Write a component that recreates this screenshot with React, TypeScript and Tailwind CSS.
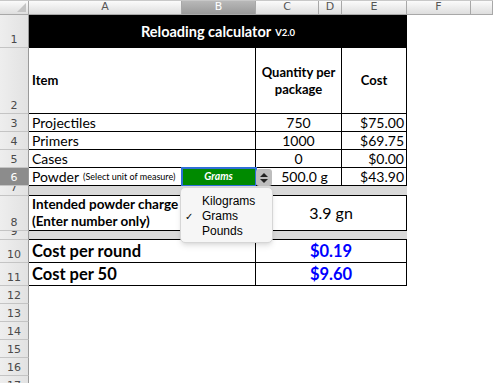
import React from "react";

const font = { fontFamily: "Lato, 'Open Sans', sans-serif" };

function RowHead({ n, h, sel }: { n?: string; h: string; sel?: boolean }) {
  return (
    <div
      className={`${h} w-[29px] shrink-0 flex items-end justify-center overflow-hidden border-r border-b border-r-[#9a9a9a] border-b-[#c4c4c4] text-[11px] leading-none pb-[2px] ${
        sel ? "bg-[#8c8c8c] text-white" : "bg-gradient-to-r from-[#eeeeee] to-[#e2e2e2] text-[#4a4a4a]"
      }`}
      style={{ fontFamily: "'DejaVu Sans', sans-serif" }}
    >
      {n}
    </div>
  );
}

function ColHead({ w, label, sel }: { w: string; label?: string; sel?: boolean }) {
  return (
    <div
      className={`${w} h-full shrink-0 flex items-center justify-center border-r border-b border-[#a8a8a8] text-[11px] ${
        sel ? "bg-gradient-to-b from-[#b8b8b8] to-[#9a9a9a] text-white" : "bg-gradient-to-b from-[#fbfbfb] to-[#dedede] text-[#555]"
      }`}
      style={{ fontFamily: "'DejaVu Sans', sans-serif" }}
    >
      {label}
    </div>
  );
}

function Row({ n, h, sel, children }: { n: string; h: string; sel?: boolean; children?: React.ReactNode }) {
  return (
    <div className={`flex ${h}`}>
      <RowHead n={n} h={h} sel={sel} />
      {children}
    </div>
  );
}

const items = [
  { name: "Projectiles", qty: "750", cost: "$75.00" },
  { name: "Primers", qty: "1000", cost: "$69.75" },
  { name: "Cases", qty: "0", cost: "$0.00" },
];

export default function App() {
  return (
    <div className="relative w-[493px] h-[383px] overflow-hidden bg-white text-black" style={font}>
      {/* column headers */}
      <div className="flex h-[15px] border-t border-[#c8c8c8]">
        <div className="relative w-[29px] h-full shrink-0 border-r border-b border-[#a8a8a8] bg-gradient-to-b from-[#fbfbfb] to-[#dedede]">
          <div className="absolute right-[2px] bottom-[2px] w-0 h-0 border-l-[9px] border-l-transparent border-b-[9px] border-b-[#c4c4c4]" />
        </div>
        <ColHead w="w-[153px]" label="A" />
        <ColHead w="w-[74px]" label="B" sel />
        <ColHead w="w-[63px]" label="C" />
        <ColHead w="w-[23px]" label="D" />
        <ColHead w="w-[65px]" label="E" />
        <ColHead w="w-[64px]" label="F" />
        <ColHead w="flex-1" />
      </div>

      <Row n="1" h="h-[33px]">
        <div className="w-[378px] bg-black text-white flex items-center justify-center font-bold text-[14.5px]">
          Reloading calculator<span className="ml-1 text-[9.5px] mt-[3px]">V2.0</span>
        </div>
      </Row>

      <Row n="2" h="h-[66px]">
        <div className="w-[227px] border-r border-b border-black flex items-center pl-[3px] font-bold text-[13px]">Item</div>
        <div className="w-[86px] border-r border-b border-black flex items-center justify-center text-center font-bold text-[13px] leading-[17px]">
          Quantity per
          <br />
          package
        </div>
        <div className="w-[65px] border-r border-b border-black flex items-center justify-center font-bold text-[13px]">Cost</div>
      </Row>

      {items.map((it, i) => (
        <Row key={it.name} n={String(i + 3)} h="h-[18px]">
          <div className="w-[227px] border-r border-b border-black flex items-center pl-[3px] text-[14px]">{it.name}</div>
          <div className="w-[86px] border-r border-b border-black flex items-center justify-center text-[14px]">{it.qty}</div>
          <div className="w-[65px] border-r border-b border-black flex items-center justify-end pr-[2px] text-[14px]">{it.cost}</div>
        </Row>
      ))}

      <Row n="6" h="h-[18px]" sel>
        <div className="w-[153px] border-b border-black flex items-center pl-[3px] text-[14px] whitespace-nowrap">
          Powder <span className="ml-1 text-[9px]">(Select unit of measure)</span>
        </div>
        <div className="w-[74px] border-r border-b border-black bg-[#008a00] outline-2 outline-[#2f6fd6] -outline-offset-1 flex items-center justify-center text-white italic font-bold text-[10.5px]">
          Grams
        </div>
        <div className="w-[86px] border-r border-b border-black flex items-center justify-center text-[14px] pl-3">500.0 g</div>
        <div className="w-[65px] border-r border-b border-black flex items-center justify-end pr-[2px] text-[14px]">$43.90</div>
      </Row>

      <Row n="7" h="h-[10px]">
        <div className="w-[378px] bg-[#d9d9d9] border-b border-black" />
      </Row>

      <Row n="8" h="h-[35px]">
        <div className="w-[227px] border-r border-b border-black flex flex-col justify-center pl-[3px] font-bold text-[13.5px] leading-[17px] whitespace-nowrap overflow-hidden">
          <span>Intended powder charge in grains</span>
          <span>(Enter number only)</span>
        </div>
        <div className="w-[151px] border-r border-b border-black flex items-center justify-center text-[16px]">3.9 gn</div>
      </Row>

      <Row n="9" h="h-[9px]">
        <div className="w-[378px] bg-[#d9d9d9] border-b border-black" />
      </Row>

      <Row n="10" h="h-[23px]">
        <div className="w-[227px] border-r border-b border-black flex items-center pl-[3px] font-bold text-[16.5px]">Cost per round</div>
        <div className="w-[151px] border-r border-b border-black flex items-center justify-center font-bold text-[16.5px] text-[#0000ff]">$0.19</div>
      </Row>

      <Row n="11" h="h-[23px]">
        <div className="w-[227px] border-r border-b border-black flex items-center pl-[3px] font-bold text-[16.5px]">Cost per 50</div>
        <div className="w-[151px] border-r border-b border-black flex items-center justify-center font-bold text-[16.5px] text-[#0000ff]">$9.60</div>
      </Row>

      {["12", "13", "14", "15", "16", "17"].map((n) => (
        <Row key={n} n={n} h="h-[18px]" />
      ))}

      {/* spinner button */}
      <div className="absolute left-[256px] top-[169px] w-[16px] h-[17px] rounded-[3px] bg-[#bdbdbd] flex flex-col items-center justify-center gap-[2px]">
        <div className="w-0 h-0 border-l-[4px] border-r-[4px] border-b-[4px] border-l-transparent border-r-transparent border-b-[#222]" />
        <div className="w-0 h-0 border-l-[4px] border-r-[4px] border-t-[4px] border-l-transparent border-r-transparent border-t-[#222]" />
      </div>

      {/* dropdown menu */}
      <div
        className="absolute left-[180px] top-[187px] w-[93px] h-[56px] rounded-[5px] bg-[#f6f6f6] border border-[#d6d6d6] shadow-md text-[12px] leading-[15px] pt-[6px]"
        style={{ fontFamily: "'Liberation Sans', sans-serif" }}
      >
        <div className="pl-[21px]">Kilograms</div>
        <div className="relative pl-[21px]">
          <span className="absolute left-[4px] top-0 text-[10px]">✓</span>
          Grams
        </div>
        <div className="pl-[21px]">Pounds</div>
      </div>
    </div>
  );
}
